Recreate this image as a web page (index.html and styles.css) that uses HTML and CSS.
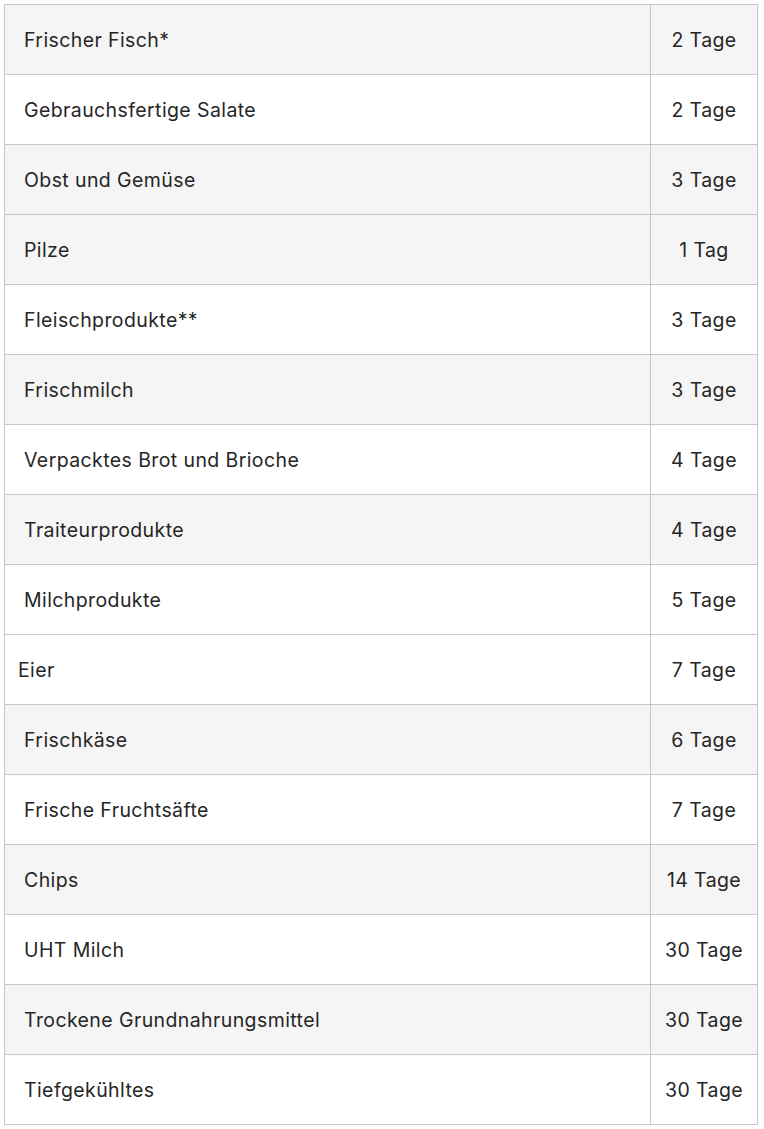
FILE: index.html
```html
<!DOCTYPE html>
<html lang="de">
<head>
<meta charset="utf-8">
<title>Haltbarkeit</title>
<link rel="stylesheet" href="styles.css">
</head>
<body>
<div class="wrap">
<table class="shelf">
<tbody>
<tr class="alt"><td class="name">Frischer Fisch*</td><td class="days">2 Tage</td></tr>
<tr><td class="name">Gebrauchsfertige Salate</td><td class="days">2 Tage</td></tr>
<tr class="alt"><td class="name">Obst und Gemüse</td><td class="days">3 Tage</td></tr>
<tr class="alt"><td class="name">Pilze</td><td class="days">1 Tag</td></tr>
<tr><td class="name">Fleischprodukte**</td><td class="days">3 Tage</td></tr>
<tr class="alt"><td class="name">Frischmilch</td><td class="days">3 Tage</td></tr>
<tr><td class="name">Verpacktes Brot und Brioche</td><td class="days">4 Tage</td></tr>
<tr class="alt"><td class="name">Traiteurprodukte</td><td class="days">4 Tage</td></tr>
<tr><td class="name">Milchprodukte</td><td class="days">5 Tage</td></tr>
<tr><td class="name tight">Eier</td><td class="days">7 Tage</td></tr>
<tr class="alt"><td class="name">Frischkäse</td><td class="days">6 Tage</td></tr>
<tr><td class="name">Frische Fruchtsäfte</td><td class="days">7 Tage</td></tr>
<tr class="alt"><td class="name">Chips</td><td class="days">14 Tage</td></tr>
<tr><td class="name">UHT Milch</td><td class="days">30 Tage</td></tr>
<tr class="alt"><td class="name">Trockene Grundnahrungsmittel</td><td class="days">30 Tage</td></tr>
<tr><td class="name">Tiefgekühltes</td><td class="days">30 Tage</td></tr>
</tbody>
</table>
</div>
</body>
</html>
```
FILE: styles.css
```css
html, body {
  margin: 0;
  padding: 0;
  background: #ffffff;
}
.wrap {
  padding: 4px;
}
.shelf {
  border-collapse: collapse;
  width: 754px;
  table-layout: fixed;
  font-family: Inter, "Noto Sans", sans-serif;
  font-size: 19.5px;
  letter-spacing: 0.4px;
  color: #262626;
}
.shelf td {
  border: 1px solid #c6c6c6;
  height: 70px;
  padding: 0;
  vertical-align: middle;
  box-sizing: border-box;
}
.shelf tr.alt td {
  background: #f5f5f5;
}
.name {
  width: 646px;
  padding-left: 19px !important;
  text-align: left;
}
.name.tight {
  padding-left: 13px !important;
}
.days {
  text-align: center;
}
```
